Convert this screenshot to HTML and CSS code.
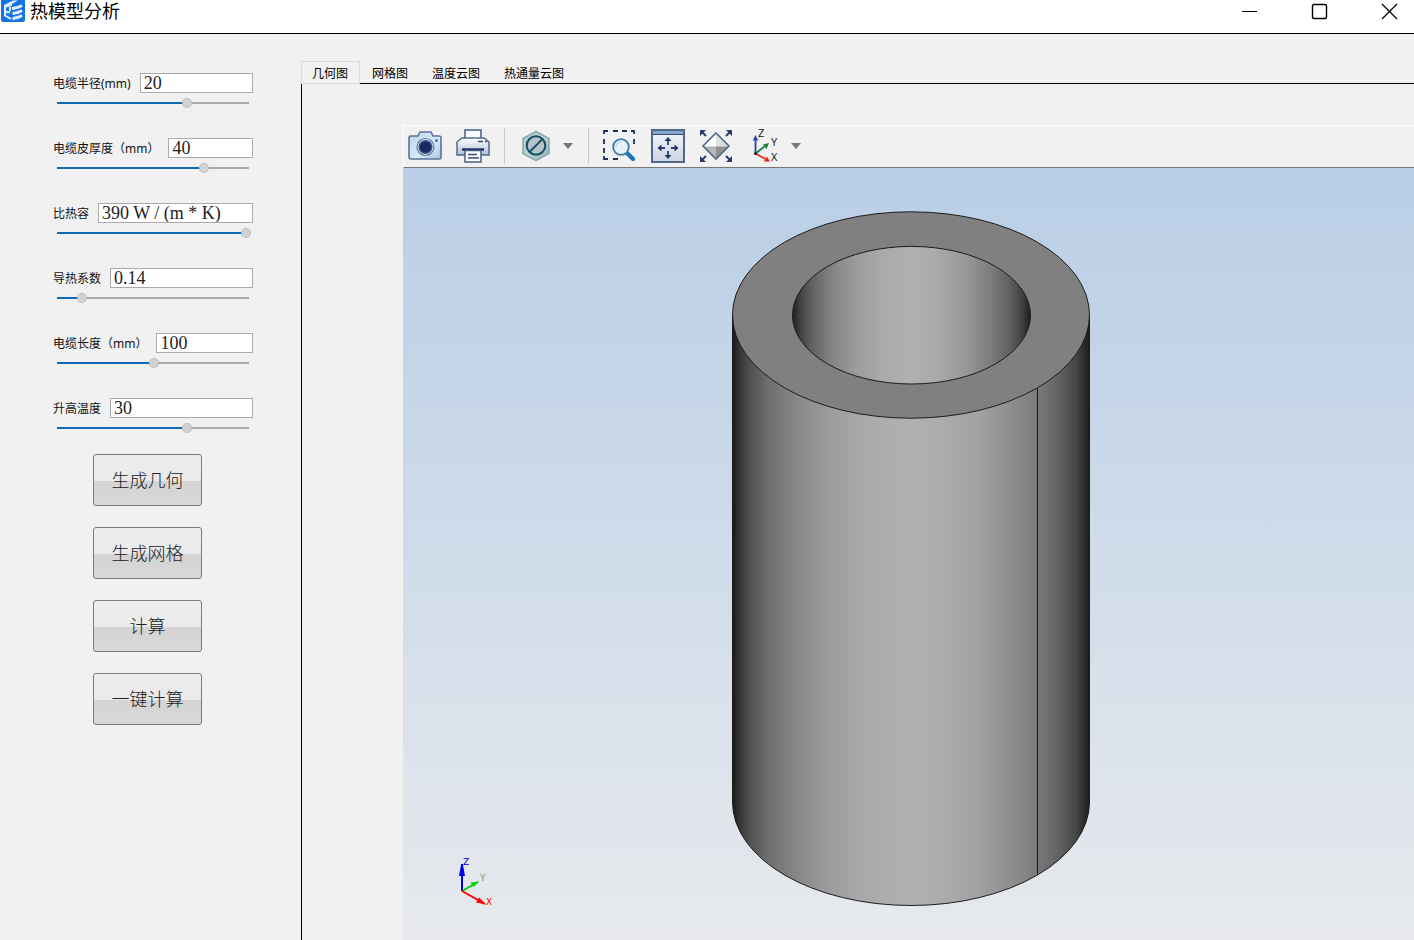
FILE: index.html
```html
<!DOCTYPE html>
<html lang="zh-CN">
<head>
<meta charset="utf-8">
<title>热模型分析</title>
<link rel="stylesheet" href="styles.css">
</head>
<body>
<header class="titlebar">
  <svg class="logo" viewBox="0 0 24 22" aria-hidden="true">
    <path fill="#1473e6" d="M0 0h24v20a2 2 0 0 1-2 2H2a2 2 0 0 1-2-2z"/>
    <path fill="#e4effd" d="M3 5l9-4.500h5L11 4v2l-8 2z"/>
    <path fill="none" stroke="#e4effd" stroke-width="2" d="M4 7v8.500l6 3.500M4 11.500l5 1M9 7v4"/>
    <path fill="none" stroke="#e4effd" stroke-width="2.800" d="M11 8.500q5 0 10-3M11.500 13.500q5 0 9.500-3M11.500 18.500q5 0 9.500-3"/>
  </svg>
  <h1 class="title">热模型分析</h1>
  <div class="window-buttons">
    <button class="window-button" aria-label="最小化"><svg viewBox="0 0 17 17"><path d="M1 8.500h15"/></svg></button>
    <button class="window-button" aria-label="最大化"><svg viewBox="0 0 17 17"><rect x="1.500" y="1.500" width="14" height="14" rx="1.500" stroke-width="1.400"/></svg></button>
    <button class="window-button" aria-label="关闭"><svg viewBox="0 0 17 17"><path stroke-width="1.300" d="M1 1l15 15M16 1L1 16"/></svg></button>
  </div>
</header>
<div class="workspace">
  <aside class="sidebar">
    <div class="fields">
      <div class="field">
        <div class="field-row"><label for="radius">电缆半径(mm)</label><input class="value" id="radius" type="text" value="20"></div>
        <input class="slider" type="range" aria-label="电缆半径" value="68" style="--fill:68%">
      </div>
      <div class="field">
        <div class="field-row"><label for="thickness">电缆皮厚度（mm）</label><input class="value" id="thickness" type="text" value="40"></div>
        <input class="slider" type="range" aria-label="电缆皮厚度" value="77" style="--fill:77%">
      </div>
      <div class="field">
        <div class="field-row"><label for="heat">比热容</label><input class="value" id="heat" type="text" value="390 W / (m * K)"></div>
        <input class="slider" type="range" aria-label="比热容" value="100" style="--fill:100%">
      </div>
      <div class="field">
        <div class="field-row"><label for="conduct">导热系数</label><input class="value" id="conduct" type="text" value="0.14"></div>
        <input class="slider" type="range" aria-label="导热系数" value="11" style="--fill:11%">
      </div>
      <div class="field">
        <div class="field-row"><label for="length">电缆长度（mm）</label><input class="value" id="length" type="text" value="100"></div>
        <input class="slider" type="range" aria-label="电缆长度" value="50" style="--fill:50%">
      </div>
      <div class="field">
        <div class="field-row"><label for="rise">升高温度</label><input class="value" id="rise" type="text" value="30"></div>
        <input class="slider" type="range" aria-label="升高温度" value="68" style="--fill:68%">
      </div>
    </div>
    <div class="actions">
      <button class="action">生成几何</button>
      <button class="action">生成网格</button>
      <button class="action">计算</button>
      <button class="action">一键计算</button>
    </div>
  </aside>
  <main class="main">
    <div class="tabs" role="tablist">
      <button class="tab tab-active" role="tab" aria-selected="true">几何图</button>
      <button class="tab" role="tab" aria-selected="false">网格图</button>
      <button class="tab" role="tab" aria-selected="false">温度云图</button>
      <button class="tab" role="tab" aria-selected="false">热通量云图</button>
    </div>
    <section class="panel">
      <div class="toolbar">
        <button class="tool" aria-label="截图">
          <svg viewBox="0 0 34 34">
            <defs><linearGradient id="cam" x1="0" y1="0" x2="1" y2="1"><stop offset="0" stop-color="#bcd7ef"/><stop offset=".6" stop-color="#d9e9f6"/><stop offset="1" stop-color="#a5c6e6"/></linearGradient></defs>
            <path fill="url(#cam)" stroke="#5c7196" stroke-width="1.600" d="M3 7h7l2-4h11l2 4h6a2 2 0 0 1 2 2v19a2 2 0 0 1-2 2H3a2 2 0 0 1-2-2V9a2 2 0 0 1 2-2z"/>
            <circle cx="17.500" cy="18" r="8.500" fill="#d5e3f2" stroke="#6279a0" stroke-width="1.200"/>
            <circle cx="17.500" cy="18" r="6.300" fill="#162b62" stroke="#3b568d" stroke-width="1.400"/>
            <circle cx="28.500" cy="11.500" r="1.500" fill="#4e73a6"/>
          </svg>
        </button>
        <button class="tool" aria-label="打印">
          <svg viewBox="0 0 34 34">
            <defs><linearGradient id="prt" x1="0" y1="0" x2="0" y2="1"><stop offset="0" stop-color="#fff"/><stop offset=".4" stop-color="#e0e6ef"/><stop offset="1" stop-color="#aebdd3"/></linearGradient></defs>
            <path fill="#fafcff" stroke="#465b84" stroke-width="1.500" d="M9 10V1h16v9"/>
            <path fill="url(#prt)" stroke="#536891" stroke-width="1.500" d="M6 9h22l5 4v13H1V13z"/>
            <path stroke="#334b79" stroke-width="1.300" d="M22 12.500h5M29 12.500h2"/>
            <path stroke="#1c2f5c" stroke-width="2.400" d="M6 20.500h22"/>
            <path fill="#fff" stroke="#465b84" stroke-width="1.500" d="M9 21.500h16V33H9z"/>
            <path stroke="#334b79" stroke-width="1.300" d="M12 25.500h9M12 29h11"/>
          </svg>
        </button>
        <span class="separator"></span>
        <div class="split">
          <button class="tool" aria-label="隐藏">
            <svg viewBox="0 0 34 34">
              <defs><linearGradient id="hex" x1="0" y1="0" x2="1" y2="1"><stop offset="0" stop-color="#a9c1c7"/><stop offset=".5" stop-color="#c4d5d9"/><stop offset="1" stop-color="#8ea9b0"/></linearGradient></defs>
              <path fill="url(#hex)" stroke="#8eabb1" stroke-width="1.600" d="M17 2.500L30 9.500v15L17 31.500 4 24.500v-15z"/>
              <circle cx="17" cy="16.500" r="9.300" fill="#b4c4cb" stroke="#174f66" stroke-width="2"/>
              <path stroke="#174f66" stroke-width="2" d="M10.500 23L23.500 10"/>
            </svg>
          </button>
          <button class="more" aria-label="更多"><svg viewBox="0 0 12 6"><path fill="#777" d="M1 0h10L6 6z"/></svg></button>
        </div>
        <span class="separator"></span>
        <button class="tool" aria-label="框选缩放">
          <svg viewBox="0 0 34 34">
            <path fill="none" stroke="#1d315f" stroke-width="1.800" d="M1 5V2h4M10 2h5M19 2h5M28 2h3v3M31 10v5M1 10v5M1 19v5M1 27v3h4M10 30h5"/>
            <path stroke="#1c76b8" stroke-width="4.200" stroke-linecap="round" d="M23.500 23.500l6.500 6.500"/>
            <circle cx="18" cy="18" r="7.800" fill="#e7f1f8" stroke="#397ca7" stroke-width="1.800"/>
            <path fill="none" stroke="#b9d8ea" stroke-width="1.300" d="M13 18a5 5 0 0 1 5-5"/>
          </svg>
        </button>
        <button class="tool" aria-label="平移">
          <svg viewBox="0 0 34 34">
            <defs><linearGradient id="win" x1="0" y1="0" x2="0" y2="1"><stop offset="0" stop-color="#f4f6fa"/><stop offset="1" stop-color="#cbd4e2"/></linearGradient></defs>
            <path fill="url(#win)" stroke="#52678e" stroke-width="2" d="M1 1h32v32H1z"/>
            <path fill="#87a7d1" d="M2 2h30v3H2z"/><path stroke="#334b79" d="M2 5.500h30"/>
            <path stroke="#2a3f6b" stroke-width="1.800" d="M17 10v6M17 22v6M8 19h6M20 19h6"/>
            <path fill="#1f3463" d="M17 8l3.500 4h-7zM17 30l3.500-4h-7zM6.500 19l4-3.500v7zM27.500 19l-4-3.500v7z"/>
          </svg>
        </button>
        <button class="tool" aria-label="适应窗口">
          <svg viewBox="0 0 34 34">
            <path fill="#fff" d="M17 4L4.500 17.500H17z"/><path fill="#dfdfdf" d="M17 4l12.500 13.500H17z"/><path fill="#b4b5b8" d="M4.500 17.500L17 30V17.500z"/><path fill="#8f9194" d="M29.500 17.500L17 30V17.500z"/>
            <path fill="none" stroke="#526a91" stroke-width="1.600" d="M17 4l13 13-13 13L4 17z"/>
            <path stroke="#263c6b" stroke-width="2" d="M2 2l5 5M32 2l-5 5M2 32l5-5M32 32l-5-5"/>
            <path fill="#263c6b" d="M1 1h6L1 7zM33 1h-6l6 6zM1 33h6l-6-6zM33 33h-6l6-6z"/>
          </svg>
        </button>
        <div class="split">
          <button class="tool" aria-label="视图方向">
            <svg viewBox="0 0 34 34" class="axes-icon">
              <path stroke="#2947a0" stroke-width="1.800" d="M8.500 24.500V10"/><path fill="#2947a0" d="M8.500 6l2.800 5.500H5.700z"/>
              <path stroke="#168040" stroke-width="1.800" d="M8.500 24.500l9-7"/><path fill="#168040" d="M22 14l-2.500 6-3.500-4.500z"/>
              <path stroke="#e32b22" stroke-width="1.800" d="M8.500 24.500l10 5.500"/><path fill="#e9201a" d="M23 32.500h-6l2.700-5z"/>
              <circle cx="8.500" cy="24.500" r="1.500" fill="#111"/>
              <text x="11" y="8">Z</text><text x="24" y="17">Y</text><text x="24" y="32">X</text>
            </svg>
          </button>
          <button class="more" aria-label="更多视图"><svg viewBox="0 0 12 6"><path fill="#777" d="M1 0h10L6 6z"/></svg></button>
        </div>
      </div>
      <div class="viewport">
        <svg class="scene" viewBox="403 168 1011 772" role="img" aria-label="圆柱筒几何模型">
          <defs>
            <linearGradient id="outer" gradientUnits="userSpaceOnUse" x1="732" y1="0" x2="1090" y2="0">
              <stop offset="0" stop-color="#161616"/><stop offset=".02" stop-color="#343434"/><stop offset=".05" stop-color="#505050"/><stop offset=".1" stop-color="#6e6e6e"/><stop offset=".19" stop-color="#8a8a8a"/><stop offset=".27" stop-color="#9c9c9c"/><stop offset=".38" stop-color="#aaa"/><stop offset=".48" stop-color="#b0b0b0"/><stop offset=".58" stop-color="#adadad"/><stop offset=".69" stop-color="#a1a1a1"/><stop offset=".79" stop-color="#8c8c8c"/><stop offset=".85" stop-color="#7b7b7b"/><stop offset=".91" stop-color="#646464"/><stop offset=".96" stop-color="#464646"/><stop offset="1" stop-color="#1a1a1a"/>
            </linearGradient>
            <linearGradient id="inner" gradientUnits="userSpaceOnUse" x1="792" y1="0" x2="1031" y2="0">
              <stop offset="0" stop-color="#1c1c1c"/><stop offset=".03" stop-color="#3c3c3c"/><stop offset=".08" stop-color="#606060"/><stop offset=".17" stop-color="#848484"/><stop offset=".27" stop-color="#9c9c9c"/><stop offset=".38" stop-color="#aaa"/><stop offset=".49" stop-color="#b0b0b0"/><stop offset=".6" stop-color="#aaa"/><stop offset=".72" stop-color="#999"/><stop offset=".83" stop-color="#7d7d7d"/><stop offset=".91" stop-color="#606060"/><stop offset=".96" stop-color="#434343"/><stop offset="1" stop-color="#1c1c1c"/>
            </linearGradient>
          </defs>
          <g stroke="#1b1b1d" stroke-width="1">
            <path fill="url(#outer)" d="M732.500 315v487a178.500 103.500 0 0 0 357 0V315z"/>
            <ellipse cx="911" cy="315" rx="178.500" ry="103.200" fill="#808080"/>
            <ellipse cx="911.500" cy="315.200" rx="119" ry="68.800" fill="url(#inner)"/>
            <path d="M1037.500 388.500V875"/>
          </g>
        </svg>
        <svg class="triad" viewBox="0 0 42 56" aria-hidden="true">
          <path stroke="#0000f5" stroke-width="2" d="M8 38V11"/><path fill="#0000f5" d="M7 12h2l2 11H5z"/>
          <path stroke="#00d000" stroke-width="2" d="M8 38l16-9"/><path fill="#00d000" d="M25 28.500l-5.500 5.500-3-4.500z"/>
          <path stroke="#f00" stroke-width="2" d="M8 38l23 13"/><path fill="#f00" d="M32 51.500l-10-2 3-5z"/>
          <text x="9" y="12" fill="#0000f5">Z</text><text x="26" y="28" fill="#6b9b78">Y</text><text x="32" y="52" fill="#f00">X</text>
        </svg>
      </div>
    </section>
  </main>
</div>
</body>
</html>
```
FILE: styles.css
```css
* { box-sizing: border-box; }

body {
  margin: 0;
  height: 100vh;
  display: flex;
  flex-direction: column;
  overflow: hidden;
  background: #f1f1f1;
  color: #111;
  font: 12px "Noto Sans", "Noto Sans CJK SC", sans-serif;
}

button {
  margin: 0;
  padding: 0;
  border: 0;
  background: none;
  color: inherit;
  font-family: inherit;
}

svg { display: block; }

.titlebar {
  flex: none;
  display: flex;
  align-items: center;
  height: 34px;
  padding: 0 0 11px 1px;
  background: #fff;
  border-bottom: 1px solid #000;
}

.logo { width: 24px; height: 22px; }

.title {
  margin: 0 0 0 5px;
  color: #000;
  font-size: 18px;
  font-weight: 400;
  line-height: 22px;
}

.window-buttons {
  display: flex;
  gap: 21px;
  margin-left: auto;
}

.window-button {
  display: grid;
  place-items: center;
  width: 49px;
  height: 21px;
}

.window-button svg {
  width: 17px;
  height: 17px;
  fill: none;
  stroke: #000;
}

.workspace {
  flex: 1;
  display: flex;
  min-height: 0;
}

.sidebar {
  flex: none;
  width: 301px;
  padding: 39px 48px 0 53px;
}

.fields {
  display: flex;
  flex-direction: column;
  gap: 30px;
}

.field-row {
  display: flex;
  align-items: center;
  gap: 9px;
  height: 20px;
}

.field-row label {
  padding-top: 2px;
  line-height: 20px;
  white-space: nowrap;
}

.value {
  flex: 1;
  min-width: 0;
  height: 20px;
  padding: 1px 3px 0;
  border: 1px solid #ababab;
  border-radius: 0;
  background: #fff;
  color: #222;
  font: 18px "Liberation Serif", serif;
}

.slider {
  display: block;
  appearance: none;
  width: calc(100% - 6px);
  height: 10px;
  margin: 5px 2px 0 4px;
  background: linear-gradient(90deg, #0f68b8 var(--fill), #a9a9a9 var(--fill)) left center / calc(100% - 2px) 2px no-repeat;
}

.slider::-webkit-slider-thumb {
  appearance: none;
  width: 10px;
  height: 10px;
  border: 1px dotted #aaa;
  border-radius: 50%;
  background: #d2d2d2;
}

.actions {
  display: flex;
  flex-direction: column;
  gap: 21px;
  margin: 21px 51px 0 40px;
}

.action {
  height: 52px;
  padding-bottom: 3px;
  border: 1px solid #7b7b7b;
  border-radius: 3px;
  background: linear-gradient(#ededed, #eaeaea 52%, #d4d4d4 52%, #d8d8d8);
  color: #222;
  font-size: 18px;
  font-weight: 300;
}

.main {
  flex: 1;
  display: flex;
  flex-direction: column;
  min-width: 0;
  padding-top: 27px;
}

.tabs {
  display: flex;
  height: 22px;
}

.tab {
  height: 23px;
  padding: 0 12px;
  color: #000;
  font-size: 12px;
}

.tab-active {
  z-index: 1;
  padding: 0 11px 0 10px;
  border: 1px solid #d9d9d9;
  background: #f1f1f1;
}

.panel {
  flex: 1;
  display: flex;
  flex-direction: column;
  min-height: 0;
  padding: 41px 0 0 101px;
  border: solid #000;
  border-width: 1px 0 0 1px;
}

.toolbar {
  flex: none;
  display: flex;
  align-items: center;
  gap: 14px;
  height: 43px;
  padding: 0 0 1px 4px;
  border: solid #fff;
  border-width: 1px 0 1px 1px;
  border-bottom-color: #777;
}

.tool, .tool svg {
  width: 34px;
  height: 34px;
}

.split {
  display: flex;
  align-items: center;
  gap: 9px;
}

.more, .more svg {
  width: 12px;
  height: 6px;
}

.separator {
  width: 1px;
  height: 36px;
  background: #cacaca;
}

.axes-icon { overflow: visible; }

.axes-icon text {
  fill: #111;
  font: 11px "Open Sans", sans-serif;
}

.viewport {
  position: relative;
  flex: 1;
  min-height: 0;
  background: linear-gradient(#b9cee6, #c6d6e8 30%, #dce3ec 75%, #e7e9ec);
}

.scene {
  width: 100%;
  height: 100%;
}

.triad {
  position: absolute;
  left: 51px;
  bottom: 31px;
  width: 42px;
  height: 56px;
}

.triad text { font: 9px "DejaVu Sans", sans-serif; }
```
